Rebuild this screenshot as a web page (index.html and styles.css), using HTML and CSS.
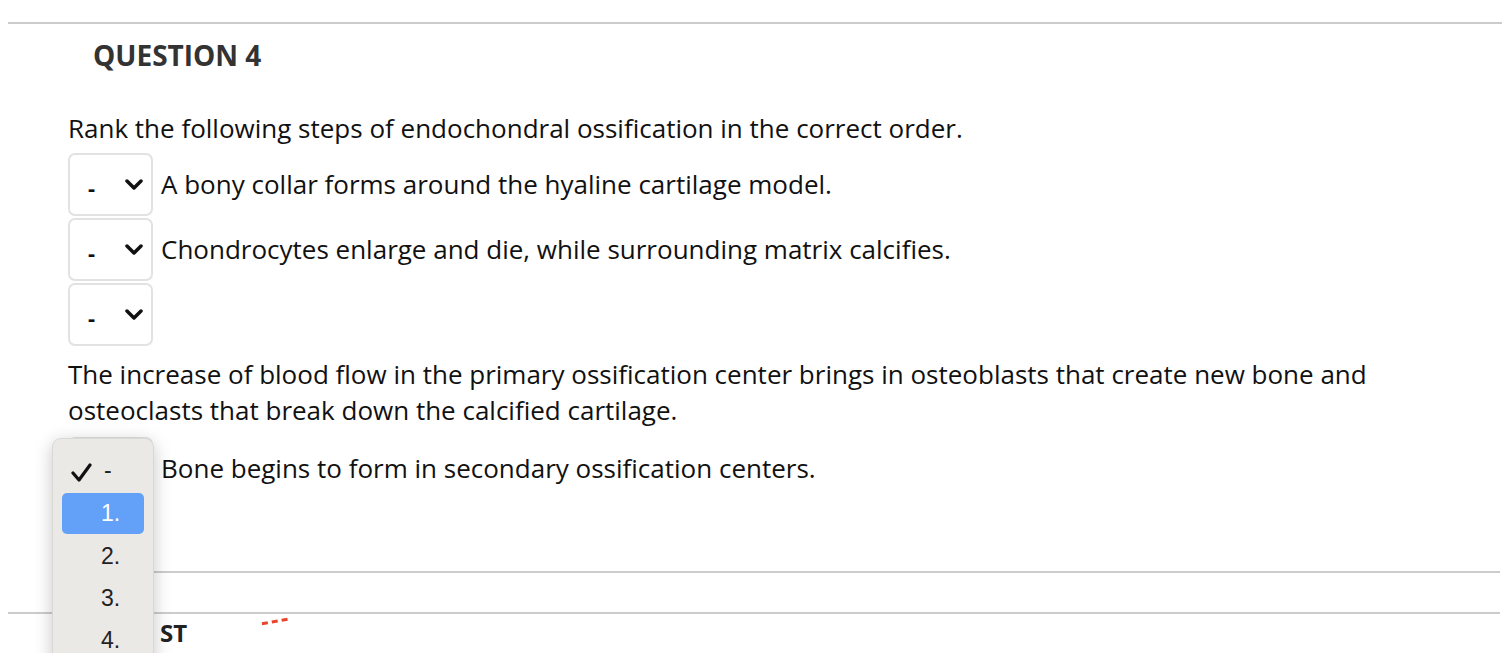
FILE: index.html
```html
<!DOCTYPE html>
<html>
<head>
<meta charset="utf-8">
<link rel="stylesheet" href="styles.css">
</head>
<body>
<div class="page">
  <div class="top-rule"></div>
  <h2 class="qtitle">QUESTION 4</h2>
  <div class="content">
    <p class="prompt">Rank the following steps of endochondral ossification in the correct order.</p>
    <div class="row">
      <div class="select"><span class="dash">-</span><svg class="chev" width="18" height="12" viewBox="0 0 18 12"><polyline points="2,2 9,9 16,2" fill="none" stroke="#111" stroke-width="3.5" stroke-linecap="round" stroke-linejoin="round"/></svg></div>
      <span class="label">A bony collar forms around the hyaline cartilage model.</span>
    </div>
    <div class="row">
      <div class="select"><span class="dash">-</span><svg class="chev" width="18" height="12" viewBox="0 0 18 12"><polyline points="2,2 9,9 16,2" fill="none" stroke="#111" stroke-width="3.5" stroke-linecap="round" stroke-linejoin="round"/></svg></div>
      <span class="label">Chondrocytes enlarge and die, while surrounding matrix calcifies.</span>
    </div>
    <div class="row">
      <div class="select"><span class="dash">-</span><svg class="chev" width="18" height="12" viewBox="0 0 18 12"><polyline points="2,2 9,9 16,2" fill="none" stroke="#111" stroke-width="3.5" stroke-linecap="round" stroke-linejoin="round"/></svg></div>
      <span class="label"></span>
    </div>
    <p class="para">The increase of blood flow in the primary ossification center brings in osteoblasts that create new bone and osteoclasts that break down the calcified cartilage.</p>
    <div class="row row4">
      <div class="select"><span class="dash">-</span><svg class="chev" width="18" height="12" viewBox="0 0 18 12"><polyline points="2,2 9,9 16,2" fill="none" stroke="#111" stroke-width="3.5" stroke-linecap="round" stroke-linejoin="round"/></svg></div>
      <span class="label">Bone begins to form in secondary ossification centers.</span>
    </div>
    <div class="inner-rule"></div>
  </div>
  <div class="bottom-rule"></div>
  <div class="footer"><span class="save">ST</span><span class="red-mark"></span></div>

  <div class="menu">
    <div class="mitem checked"><svg class="check" width="22" height="20" viewBox="0 0 22 20"><polyline points="2,10 8,17 19,2" fill="none" stroke="#111" stroke-width="3.2" stroke-linecap="round" stroke-linejoin="round"/></svg><span>-</span></div>
    <div class="mitem active"><span>1.</span></div>
    <div class="mitem"><span>2.</span></div>
    <div class="mitem"><span>3.</span></div>
    <div class="mitem"><span>4.</span></div>
  </div>
</div>
</body>
</html>
```

FILE: styles.css
```css
html, body {
  margin: 0;
  padding: 0;
  background: #ffffff;
}
body {
  font-family: "Open Sans", "Noto Sans", sans-serif;
  color: #111;
  overflow: hidden;
  height: 653px;
}
.page {
  position: relative;
  height: 653px;
  box-sizing: border-box;
  padding-top: 22px;
}
.top-rule {
  height: 2px;
  background: #cccccc;
  margin: 0 0 0 8px;
}
.qtitle {
  margin: 13px 0 0 93px;
  font-size: 28px;
  font-weight: 700;
  color: #333333;
  line-height: 36px;
}
.content {
  padding-left: 68px;
}
.prompt {
  margin: 37px 0 0 0;
  font-size: 26px;
  line-height: 36px;
}
.row {
  display: flex;
  align-items: center;
  gap: 8px;
  margin-top: 2px;
  height: 63px;
}
.content .row:first-of-type { margin-top: 7px; }
.select {
  box-sizing: border-box;
  width: 85px;
  height: 63px;
  border: 2px solid #e2e2e2;
  border-radius: 7px;
  display: flex;
  align-items: center;
  padding-left: 18px;
  position: relative;
  flex: none;
}
.dash {
  font-size: 22px;
  font-weight: 700;
  line-height: 1;
  margin-top: 4px;
}
.chev {
  position: absolute;
  left: 55px;
  top: 24px;
}
.label {
  font-size: 26px;
  line-height: 36px;
  margin-top: -2px;
}
.para {
  margin: 10px 0 0 0;
  font-size: 26px;
  line-height: 36px;
  width: 1340px;
}
.row4 {
  margin-top: 9px;
}
.inner-rule {
  height: 2px;
  background: #cccccc;
  margin-top: 71px;
  margin-right: 2px;
}
.bottom-rule {
  height: 2px;
  background: #cccccc;
  margin: 39px 2px 0 8px;
}
.footer {
  position: relative;
  height: 40px;
  padding-left: 160px;
}
.save {
  display: inline-block;
  margin-top: 4px;
  font-size: 24px;
  line-height: 30px;
  font-weight: 700;
  color: #222;
}
.red-mark {
  position: absolute;
  left: 262px;
  top: 6px;
  width: 26px;
  height: 3px;
  border-top: 3px dashed #e8452c;
  transform: rotate(-10deg);
}
.menu {
  position: absolute;
  left: 52px;
  top: 438px;
  width: 102px;
  height: 240px;
  background: #eae9e6;
  border-radius: 9px;
  border: 1px solid #d9d8d5;
  box-shadow: 0 4px 18px rgba(0,0,0,0.22);
  box-sizing: border-box;
  padding: 9px 9px 0 9px;
  font-family: "Liberation Sans", Arial, sans-serif;
  font-size: 23px;
  color: #222;
}
.mitem {
  height: 42px;
  display: flex;
  align-items: center;
  padding-left: 39px;
  border-radius: 5px;
  position: relative;
}
.mitem.checked {
  height: 45px;
  padding-left: 42px;
}
.check {
  position: absolute;
  left: 9px;
  top: 15px;
}
.mitem.active {
  background: #63a1f8;
  color: #ffffff;
  height: 41px;
  margin-bottom: 1px;
}
```
